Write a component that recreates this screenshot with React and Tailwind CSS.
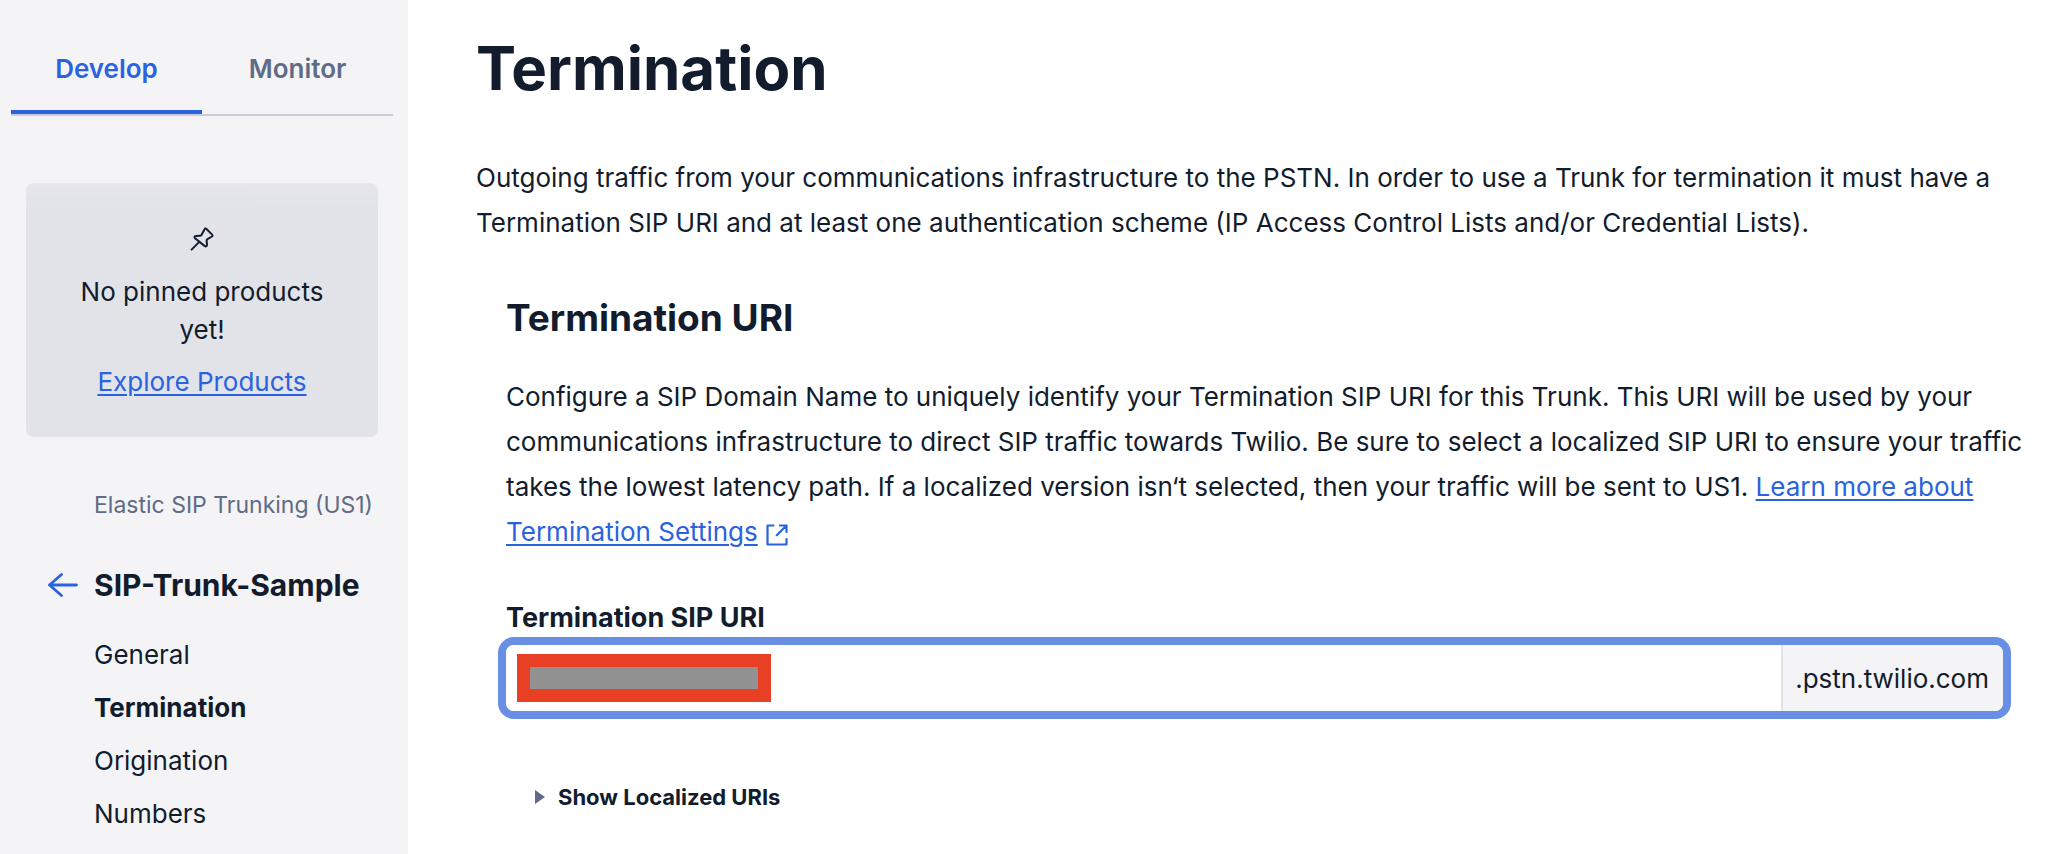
const navItems = [
  { label: "General", active: false },
  { label: "Termination", active: true },
  { label: "Origination", active: false },
  { label: "Numbers", active: false },
];

function PinIcon() {
  return (
    <svg viewBox="0 0 24 24" className="h-6 w-6" fill="none" stroke="currentColor" strokeWidth="2" strokeLinejoin="round" strokeLinecap="round" aria-hidden="true">
      <path d="M14.600 2.200c.5-.8 1.200-.9 1.900-.2l5.600 5.600c.7.7.6 1.400-.2 1.900l-4.400 2.600c-.7.5-1 1-.9 1.700l.4 3.900c0 1.500-1.500 2.200-2.500 1.200L5 11.200c-1-1-.5-2.300 1-2.300l3.800-.1c.8 0 1.400-.3 1.800-1z" />
      <path d="M9.300 14.900 1.600 22.600" />
    </svg>
  );
}

function ArrowLeftIcon() {
  return (
    <svg viewBox="0 0 30 24" className="h-6 w-[30px]" fill="none" stroke="currentColor" strokeWidth="2.8" strokeLinecap="round" strokeLinejoin="round" aria-hidden="true">
      <path d="M28.500 12H1.500M13.500 1.500 1.500 12l12 10.500" />
    </svg>
  );
}

function ExternalIcon() {
  return (
    <svg viewBox="0 0 22 22" className="ml-2 inline h-[22px] w-[22px] align-[-5px]" fill="none" stroke="currentColor" strokeWidth="2.200" strokeLinejoin="round" strokeLinecap="round" aria-hidden="true">
      <path d="M7.500 1.500H1.500v19h19V15M10.800 11.200 20.500 1.500M14 1.500h6.500V8" />
    </svg>
  );
}

function Sidebar() {
  return (
    <aside className="w-[408px] shrink-0 bg-[#f4f4f6]">
      <div role="tablist" className="mr-[15px] ml-[11px] flex border-b-2 border-[#cacdd8] pt-5 font-semibold">
        <button type="button" role="tab" aria-selected="true" className="h-[94px] flex-1 border-b-4 border-[#2a62df] pt-1.5 text-[#2a62df]">
          Develop
        </button>
        <button type="button" role="tab" aria-selected="false" className="h-[94px] flex-1 border-b-4 border-transparent pt-1.5 text-[#606b85]">
          Monitor
        </button>
      </div>

      <section className="mt-[67px] mr-[30px] ml-[26px] flex flex-col items-center rounded-lg bg-linear-to-b from-[#e6e7ec] to-[#e1e3e9] to-10% px-10 pt-11 pb-9 text-center">
        <PinIcon />
        <p className="mt-[22px] leading-[38px]">No pinned products yet!</p>
        <a href="#products" className="mt-[14px] leading-[38px] text-[#2a62df] underline decoration-2 underline-offset-3">
          Explore Products
        </a>
      </section>

      <nav aria-label="Trunk" className="pt-[50px] pr-4 pl-12">
        <p className="pl-[46px] text-[23px] leading-9 text-[#606b85]">Elastic SIP Trunking (US1)</p>
        <div className="mt-[42px] flex items-center gap-4">
          <a href="#trunks" aria-label="Back to trunks" className="text-[#2a62df]">
            <ArrowLeftIcon />
          </a>
          <h2 className="text-[30px] leading-10 font-bold whitespace-nowrap">SIP-Trunk-Sample</h2>
        </div>
        <ul className="mt-[30px] flex flex-col gap-[13px] pl-[46px] leading-10">
          {navItems.map((item) => (
            <li key={item.label}>
              <a
                href={"#" + item.label.toLowerCase()}
                aria-current={item.active ? "page" : undefined}
                className={item.active ? "font-bold" : "font-normal"}
              >
                {item.label}
              </a>
            </li>
          ))}
        </ul>
      </nav>
    </aside>
  );
}

export default function App() {
  return (
    <div className="flex min-h-screen bg-white font-['Inter','Liberation_Sans',sans-serif] text-[26px] text-[#121c2d]">
      <Sidebar />
      <main className="min-w-0 flex-1 pt-8 pr-4 pl-[68px]">
        <h1 className="text-[60px] leading-[72px] font-bold">Termination</h1>
        <p className="mt-[51px] leading-[45px]">
          Outgoing traffic from your communications infrastructure to the PSTN. In order to use a Trunk for termination it must have a
          Termination SIP URI and at least one authentication scheme (IP Access Control Lists and/or Credential Lists).
        </p>
        <section className="mt-[49px] pl-[30px]">
          <h2 className="text-[37px] leading-12 font-bold">Termination URI</h2>
          <p className="mt-8 leading-[45px]">
            Configure a SIP Domain Name to uniquely identify your Termination SIP URI for this Trunk. This URI will be used by your
            communications infrastructure to direct SIP traffic towards Twilio. Be sure to select a localized SIP URI to ensure your traffic
            takes the lowest latency path. If a localized version isn‘t selected, then your traffic will be sent to US1.{" "}
            <a href="#settings" className="text-[#2a62df]">
              <span className="underline decoration-2 underline-offset-3">Learn more about Termination Settings</span>
              <ExternalIcon />
            </a>
          </p>

          <label htmlFor="sip-uri" className="mt-[45px] block text-[27px] leading-[38px] font-bold">
            Termination SIP URI
          </label>
          <div className="relative mr-[21px] -ml-2 flex h-[82px] overflow-hidden rounded-2xl border-8 border-[#688fe3]">
            <input id="sip-uri" type="text" className="min-w-0 flex-1 bg-white px-4 outline-none" />
            <span className="flex items-center border-l-2 border-[#e1e3ea] bg-[#f4f4f6] pr-[14px] pl-3">.pstn.twilio.com</span>
            <div className="absolute top-[9px] left-[11px] h-12 w-[254px] border-[13px] border-[#e93f25] bg-[#919191]" />
          </div>

          <details className="mt-[58px] pl-[29px] text-[22px]">
            <summary className="flex list-none items-center gap-[13px] leading-10 font-bold">
              <svg viewBox="0 0 10 14" className="h-[14px] w-[10px]" fill="#606b85" aria-hidden="true">
                <path d="M0 0 10 7 0 14z" />
              </svg>
              Show Localized URIs
            </summary>
          </details>
        </section>
      </main>
    </div>
  );
}
